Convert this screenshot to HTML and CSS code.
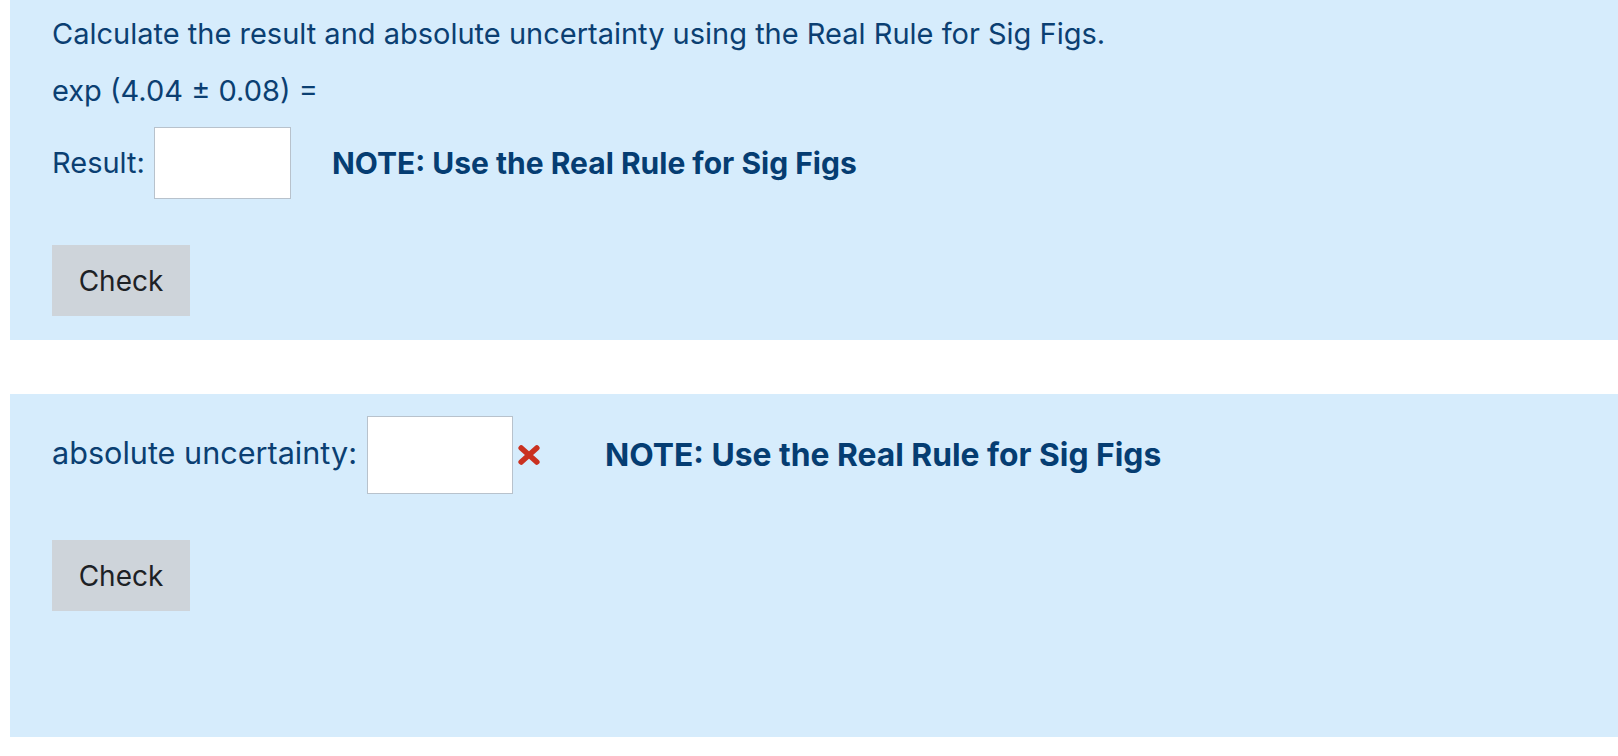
FILE: index.html
```html
<!DOCTYPE html>
<html lang="en">
<head>
<meta charset="utf-8">
<title>Sig Figs</title>
<link rel="stylesheet" href="styles.css">
</head>
<body>
<div class="page">
  <section class="panel panel-first">
    <p class="qtext">Calculate the result and absolute uncertainty using the Real Rule for Sig Figs.</p>
    <p class="qtext expr">exp (4.04 ± 0.08) =</p>
    <div class="answer-row">
      <label class="label" for="res">Result:</label>
      <input class="answer answer-a" id="res" type="text">
      <span class="note note-a">NOTE: Use the Real Rule for Sig Figs</span>
    </div>
    <button class="check" type="button">Check</button>
  </section>

  <section class="panel panel-second">
    <div class="answer-row">
      <label class="label label-b" for="unc">absolute uncertainty:</label>
      <input class="answer answer-b" id="unc" type="text">
      <svg class="wrong" viewBox="0 0 22 20" width="22" height="20" aria-hidden="true">
        <path d="M3.2 3 L18.8 17 M18.8 3 L3.2 17" stroke="#ca3120" stroke-width="5.6" stroke-linecap="round" fill="none"/>
      </svg>
      <span class="note note-b">NOTE: Use the Real Rule for Sig Figs</span>
    </div>
    <button class="check" type="button">Check</button>
  </section>
</div>
</body>
</html>
```

FILE: styles.css
```css
html, body {
  margin: 0;
  padding: 0;
  background: #ffffff;
}

body {
  font-family: Inter, "Noto Sans", "Liberation Sans", sans-serif;
  color: #0b3f72;
}

.page {
  padding-left: 10px;
}

.panel {
  background: #d6ecfc;
  padding-left: 42px;
}

.panel-first {
  padding-top: 14px;
  padding-bottom: 24px;
}

.panel-second {
  margin-top: 54px;
  padding-top: 22px;
  padding-bottom: 126px;
}

.qtext {
  margin: 0 0 17px 0;
  font-size: 29px;
  line-height: 40px;
}

.expr {
  margin-bottom: 16px;
}

.answer-row {
  display: flex;
  align-items: center;
}

.label {
  font-size: 29px;
  line-height: 40px;
}

.label-b {
  font-size: 30.6px;
  margin-bottom: 5px;
}

.answer {
  box-sizing: border-box;
  margin: 0;
  background: #ffffff;
  border: 1px solid #b8c2cc;
  border-radius: 0;
  padding: 0;
  outline: none;
}

.answer-a {
  width: 137px;
  height: 72px;
  margin-left: 9px;
}

.answer-b {
  width: 146px;
  height: 78px;
  margin-left: 10px;
}

.note {
  font-weight: 700;
  font-size: 30px;
  line-height: 40px;
  color: #053d72;
}

.note-a {
  margin-left: 41px;
}

.note-b {
  font-size: 31.8px;
  margin-left: 65px;
}

.wrong {
  display: block;
  margin-left: 5px;
}

.check {
  display: block;
  margin: 46px 0 0 0;
  width: 138px;
  height: 71px;
  border: none;
  border-radius: 0;
  background: #ced4da;
  color: #1d2125;
  font-family: Inter, "Noto Sans", "Liberation Sans", sans-serif;
  font-size: 28px;
  padding: 0;
}
```
